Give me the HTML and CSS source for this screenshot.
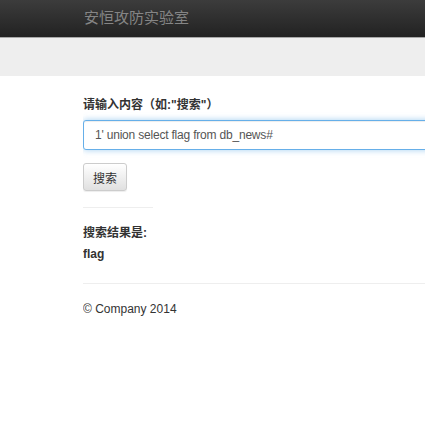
FILE: index.html
```html
<!DOCTYPE html>
<html lang="zh-CN">
<head>
<meta charset="utf-8">
<title>安恒攻防实验室</title>
<link rel="stylesheet" href="styles.css">
</head>
<body>
<div class="navbar">
  <div class="brand">安恒攻防实验室</div>
</div>
<div class="jumbotron"></div>
<div class="container">
  <form class="search-form">
    <label class="field-label" for="q">请输入内容（如:"搜索"）</label>
    <input class="field-input" id="q" type="text" value="1' union select flag from db_news#">
    <button class="btn" type="button">搜索</button>
  </form>
  <hr class="short-rule">
  <div class="result-title">搜索结果是:</div>
  <div class="result-value">flag</div>
  <hr class="long-rule">
  <footer class="footer">© Company 2014</footer>
</div>
</body>
</html>
```

FILE: styles.css
```css
html, body {
  margin: 0;
  padding: 0;
  overflow: hidden;
  background: #fff;
}
body {
  font-family: "Liberation Sans", Arial, "Noto Sans CJK SC", sans-serif;
  font-size: 12px;
  color: #333;
  width: 425px;
}
.navbar {
  height: 37px;
  background: linear-gradient(to bottom, #3c3c3c 0%, #222 100%);
  border-bottom: 1px solid #a8a8a8;
  box-sizing: content-box;
}
.brand {
  padding-left: 84px;
  line-height: 34px;
  font-size: 15px;
  color: #858585;
  font-family: "Noto Sans CJK SC", sans-serif;
}
.jumbotron {
  height: 38px;
  background: #eee;
}
.container {
  margin-left: 83px;
  width: 342px;
  overflow: hidden;
  padding-bottom: 8px;
}
.search-form {
  display: flex;
  flex-direction: column;
  align-items: flex-start;
  padding-top: 21px;
  padding-left: 0;
}
.field-label {
  font-weight: bold;
  font-size: 12px;
  line-height: 17px;
  margin-bottom: 6px;
  font-family: "Liberation Sans", Arial, "Noto Sans CJK SC", sans-serif;
}
.field-input {
  box-sizing: border-box;
  width: 400px;
  flex-shrink: 0;
  height: 30px;
  padding: 0 11px;
  font-family: "Liberation Sans", Arial, sans-serif;
  font-size: 12px;
  letter-spacing: -0.2px;
  color: #555;
  border: 1px solid #66afe9;
  border-radius: 3px;
  outline: none;
  box-shadow: inset 0 1px 1px rgba(0,0,0,.075), 0 0 6px rgba(102,175,233,.6);
  margin: 0;
}
.btn {
  margin-top: 13px;
  box-sizing: border-box;
  height: 28px;
  width: 44px;
  padding: 0;
  font-family: "Noto Sans CJK SC", sans-serif;
  font-size: 12px;
  color: #333;
  background: linear-gradient(to bottom, #fff 0%, #e0e0e0 100%);
  border: 1px solid #ccc;
  border-radius: 3px;
  box-shadow: inset 0 1px 0 rgba(255,255,255,.15), 0 1px 1px rgba(0,0,0,.075);
}
.short-rule {
  width: 70px;
  margin: 16px 0 0 0;
  border: 0;
  border-top: 1px solid #eee;
  height: 0;
}
.result-title {
  margin-top: 17px;
  font-weight: bold;
  line-height: 17px;
}
.result-value {
  margin-top: 4px;
  font-weight: bold;
  line-height: 17px;
}
.long-rule {
  margin: 20px 0 0 0;
  border: 0;
  border-top: 1px solid #eee;
  height: 0;
  width: 100%;
}
.footer {
  margin-top: 17px;
  line-height: 17px;
}
```
